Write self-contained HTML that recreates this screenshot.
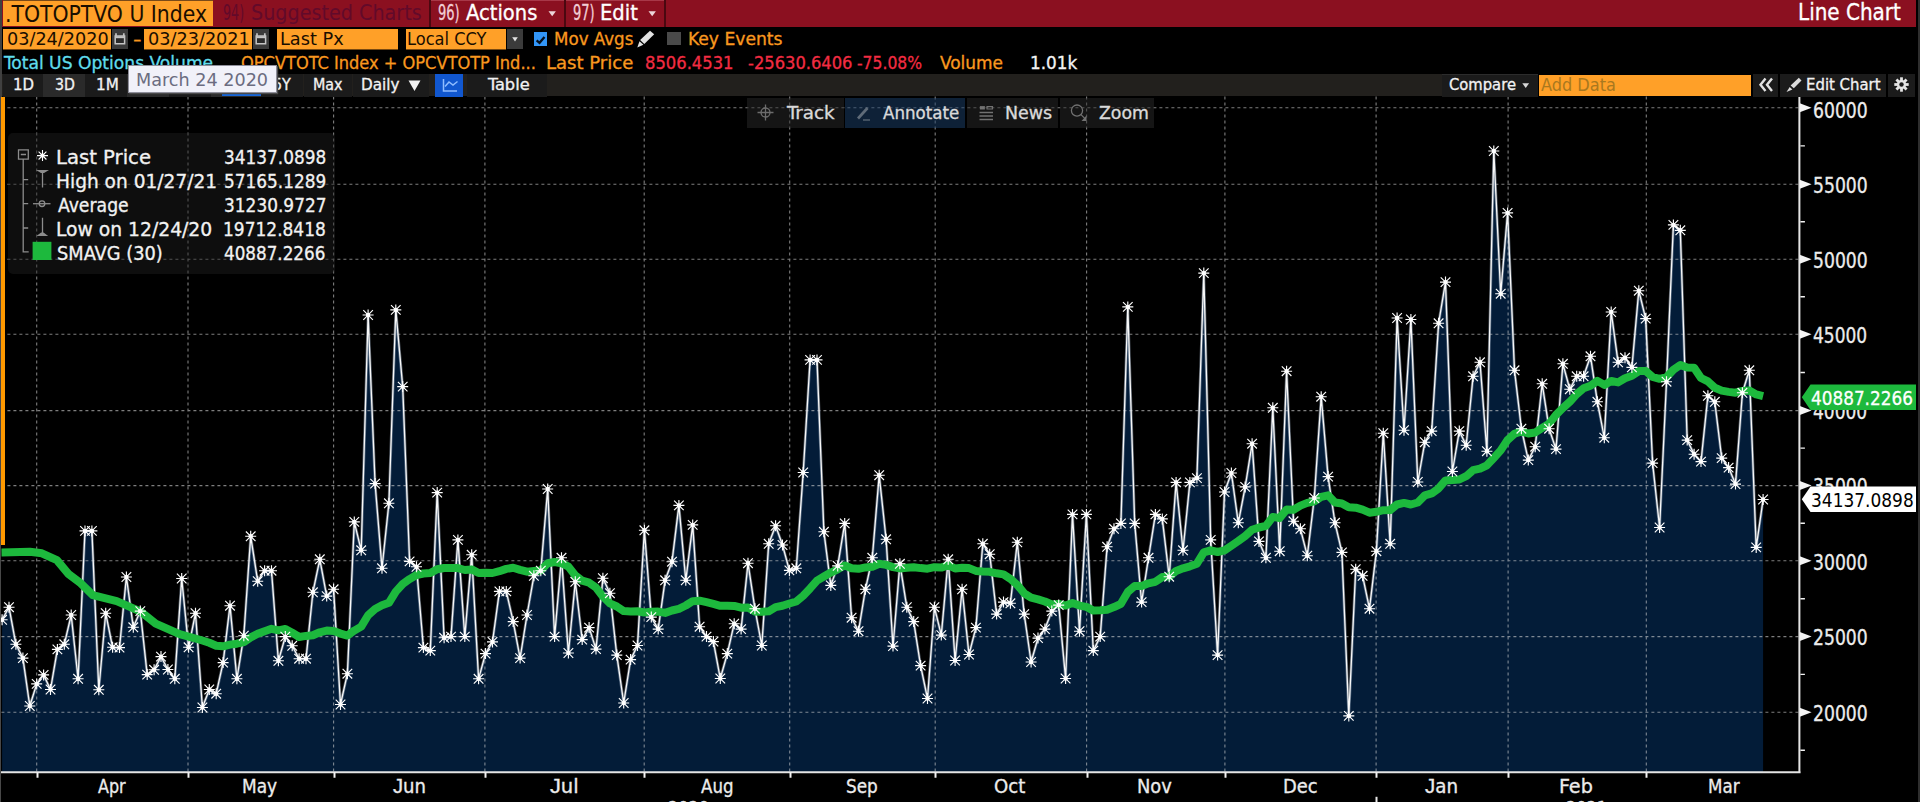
<!DOCTYPE html>
<html lang="en"><head><meta charset="utf-8"><title>.TOTOPTVO U Index - Line Chart</title>
<style>
html,body{margin:0;padding:0;background:#000;}
body{width:1920px;height:802px;overflow:hidden;position:relative;font-family:"DejaVu Sans Condensed","Liberation Sans",sans-serif;color:#fff;}
.a{position:absolute;white-space:pre;line-height:1;transform-origin:0 0;}
.k{-webkit-text-stroke:.3px;}
.b{position:absolute;}
#chart{position:absolute;left:0;top:0;}
.or{background:#ffa028;}
.tb{position:absolute;top:74px;height:22.5px;background:#1b1b1b;}
</style></head><body>
<svg id="chart" width="1920" height="802" viewBox="0 0 1920 802">
<defs><g id="s" stroke="#fff" stroke-width="1.15" stroke-linecap="butt"><path d="M-5.500 0H5.500M0 -5.500V5.500M-4.800 -4.800L4.800 4.800M-4.800 4.800L4.800 -4.800"/><circle r="2.200" fill="#fff" stroke="none"/></g></defs>
<path d="M2.1 772.25 L2.1 619.8 L9.0 607.2 L15.9 644.3 L22.9 658.1 L29.8 706.0 L36.7 683.9 L43.6 674.9 L50.5 689.5 L57.4 649.4 L64.3 644.3 L71.2 615.0 L78.1 678.8 L85.0 530.9 L91.9 530.9 L98.8 689.8 L105.7 613.2 L112.6 647.3 L119.5 647.6 L126.4 577.0 L133.3 627.3 L140.3 611.1 L147.2 674.6 L154.1 669.8 L161.0 656.6 L167.9 669.5 L174.8 678.8 L181.7 578.5 L188.6 647.3 L195.5 613.2 L202.4 707.5 L209.3 689.5 L216.2 693.7 L223.1 662.6 L230.0 605.7 L236.9 678.8 L243.8 635.7 L250.7 536.3 L257.7 581.2 L264.6 570.7 L271.5 570.7 L278.4 660.8 L285.3 636.6 L292.2 645.8 L299.1 658.7 L306.0 658.7 L312.9 592.3 L319.8 559.3 L326.7 596.1 L333.6 589.3 L340.5 704.5 L347.4 673.7 L354.3 521.9 L361.2 550.3 L368.1 315.0 L375.1 483.6 L382.0 568.3 L388.9 503.3 L395.8 309.9 L402.7 386.6 L409.6 561.4 L416.5 566.8 L423.4 647.6 L430.3 650.6 L437.2 492.6 L444.1 637.8 L451.0 636.6 L457.9 539.9 L464.8 636.6 L471.7 554.8 L478.6 678.8 L485.5 653.6 L492.5 641.9 L499.4 591.4 L506.3 591.4 L513.2 621.6 L520.1 658.1 L527.0 615.0 L533.9 575.8 L540.8 570.7 L547.7 489.0 L554.6 636.6 L561.5 557.8 L568.4 653.0 L575.3 581.8 L582.2 639.6 L589.1 627.6 L596.0 649.1 L602.9 578.2 L609.9 593.2 L616.8 655.1 L623.7 703.0 L630.6 659.6 L637.5 645.5 L644.4 530.3 L651.3 617.1 L658.2 629.1 L665.1 580.3 L672.0 561.7 L678.9 505.4 L685.8 580.3 L692.7 524.9 L699.6 626.7 L706.5 636.6 L713.4 641.6 L720.3 678.5 L727.3 653.6 L734.2 623.7 L741.1 629.1 L748.0 563.2 L754.9 608.7 L761.8 645.5 L768.7 543.8 L775.6 525.8 L782.5 545.0 L789.4 570.4 L796.3 568.3 L803.2 472.5 L810.1 359.9 L817.0 359.9 L823.9 531.8 L830.8 585.4 L837.7 565.9 L844.7 523.4 L851.6 617.7 L858.5 631.2 L865.4 589.3 L872.3 557.8 L879.2 475.2 L886.1 539.3 L893.0 646.1 L899.9 563.8 L906.8 607.2 L913.7 621.6 L920.6 665.6 L927.5 698.5 L934.4 607.2 L941.3 635.1 L948.2 559.3 L955.1 660.5 L962.1 589.3 L969.0 654.5 L975.9 627.6 L982.8 543.8 L989.7 554.2 L996.6 614.1 L1003.5 602.1 L1010.4 603.3 L1017.3 542.3 L1024.2 614.1 L1031.1 662.0 L1038.0 638.1 L1044.9 629.1 L1051.8 611.1 L1058.7 605.1 L1065.6 678.5 L1072.5 514.4 L1079.5 631.2 L1086.4 514.4 L1093.3 650.6 L1100.2 636.6 L1107.1 546.8 L1114.0 528.8 L1120.9 523.4 L1127.8 306.9 L1134.7 523.4 L1141.6 602.1 L1148.5 557.8 L1155.4 514.4 L1162.3 518.9 L1169.2 576.7 L1176.1 482.4 L1183.0 550.3 L1189.9 482.4 L1196.9 478.1 L1203.8 273.1 L1210.7 539.9 L1217.6 655.1 L1224.5 492.0 L1231.4 473.0 L1238.3 522.8 L1245.2 486.9 L1252.1 443.7 L1259.0 541.4 L1265.9 557.8 L1272.8 407.8 L1279.7 551.2 L1286.6 371.2 L1293.5 521.3 L1300.4 528.8 L1307.3 555.7 L1314.3 498.0 L1321.2 396.7 L1328.1 476.6 L1335.0 522.8 L1341.9 552.4 L1348.8 715.9 L1355.7 569.2 L1362.6 575.8 L1369.5 608.7 L1376.4 551.2 L1383.3 433.2 L1390.2 543.8 L1397.1 318.0 L1404.0 430.2 L1410.9 319.5 L1417.8 482.0 L1424.8 442.2 L1431.7 431.1 L1438.6 323.3 L1445.5 282.1 L1452.4 471.5 L1459.3 431.1 L1466.2 445.2 L1473.1 376.3 L1480.0 362.3 L1486.9 451.2 L1493.8 151.0 L1500.7 293.7 L1507.6 212.9 L1514.5 370.3 L1521.4 428.7 L1528.3 460.1 L1535.2 446.7 L1542.2 383.8 L1549.1 428.7 L1556.0 449.1 L1562.9 363.8 L1569.8 389.2 L1576.7 376.3 L1583.6 376.3 L1590.5 356.3 L1597.4 401.8 L1604.3 437.7 L1611.2 312.0 L1618.1 362.3 L1625.0 357.8 L1631.9 367.4 L1638.8 290.7 L1645.7 318.6 L1652.6 463.1 L1659.6 527.5 L1666.5 381.7 L1673.4 224.9 L1680.3 230.3 L1687.2 440.1 L1694.1 454.2 L1701.0 461.6 L1707.9 395.8 L1714.8 401.8 L1721.7 458.1 L1728.6 467.6 L1735.5 484.1 L1742.4 392.8 L1749.3 370.3 L1756.2 547.4 L1763.1 499.5 L1763.1 772.25 Z" fill="#031c38"/>
<path d="M1.400 712.2H1799.4 M1.400 636.6H1799.4 M1.400 560.7H1799.4 M1.400 485.6H1799.4 M1.400 410.6H1799.4 M1.400 334.3H1799.4 M1.400 259.2H1799.4 M1.400 184.2H1799.4 M1.400 107.7H1799.4 M36.7 96.5V772.25 M188.0 96.5V772.25 M333.6 96.5V772.25 M484.9 96.5V772.25 M644.2 96.5V772.25 M789.7 96.5V772.25 M935.2 96.5V772.25 M1086.6 96.5V772.25 M1224.9 96.5V772.25 M1376.1 96.5V772.25 M1508.1 96.5V772.25 M1646.3 96.5V772.25" stroke="#d2d2d2" stroke-width="1.1" stroke-dasharray="3 3" fill="none" opacity="0.6"/>
<path d="M2.1 619.8 L9.0 607.2 L15.9 644.3 L22.9 658.1 L29.8 706.0 L36.7 683.9 L43.6 674.9 L50.5 689.5 L57.4 649.4 L64.3 644.3 L71.2 615.0 L78.1 678.8 L85.0 530.9 L91.9 530.9 L98.8 689.8 L105.7 613.2 L112.6 647.3 L119.5 647.6 L126.4 577.0 L133.3 627.3 L140.3 611.1 L147.2 674.6 L154.1 669.8 L161.0 656.6 L167.9 669.5 L174.8 678.8 L181.7 578.5 L188.6 647.3 L195.5 613.2 L202.4 707.5 L209.3 689.5 L216.2 693.7 L223.1 662.6 L230.0 605.7 L236.9 678.8 L243.8 635.7 L250.7 536.3 L257.7 581.2 L264.6 570.7 L271.5 570.7 L278.4 660.8 L285.3 636.6 L292.2 645.8 L299.1 658.7 L306.0 658.7 L312.9 592.3 L319.8 559.3 L326.7 596.1 L333.6 589.3 L340.5 704.5 L347.4 673.7 L354.3 521.9 L361.2 550.3 L368.1 315.0 L375.1 483.6 L382.0 568.3 L388.9 503.3 L395.8 309.9 L402.7 386.6 L409.6 561.4 L416.5 566.8 L423.4 647.6 L430.3 650.6 L437.2 492.6 L444.1 637.8 L451.0 636.6 L457.9 539.9 L464.8 636.6 L471.7 554.8 L478.6 678.8 L485.5 653.6 L492.5 641.9 L499.4 591.4 L506.3 591.4 L513.2 621.6 L520.1 658.1 L527.0 615.0 L533.9 575.8 L540.8 570.7 L547.7 489.0 L554.6 636.6 L561.5 557.8 L568.4 653.0 L575.3 581.8 L582.2 639.6 L589.1 627.6 L596.0 649.1 L602.9 578.2 L609.9 593.2 L616.8 655.1 L623.7 703.0 L630.6 659.6 L637.5 645.5 L644.4 530.3 L651.3 617.1 L658.2 629.1 L665.1 580.3 L672.0 561.7 L678.9 505.4 L685.8 580.3 L692.7 524.9 L699.6 626.7 L706.5 636.6 L713.4 641.6 L720.3 678.5 L727.3 653.6 L734.2 623.7 L741.1 629.1 L748.0 563.2 L754.9 608.7 L761.8 645.5 L768.7 543.8 L775.6 525.8 L782.5 545.0 L789.4 570.4 L796.3 568.3 L803.2 472.5 L810.1 359.9 L817.0 359.9 L823.9 531.8 L830.8 585.4 L837.7 565.9 L844.7 523.4 L851.6 617.7 L858.5 631.2 L865.4 589.3 L872.3 557.8 L879.2 475.2 L886.1 539.3 L893.0 646.1 L899.9 563.8 L906.8 607.2 L913.7 621.6 L920.6 665.6 L927.5 698.5 L934.4 607.2 L941.3 635.1 L948.2 559.3 L955.1 660.5 L962.1 589.3 L969.0 654.5 L975.9 627.6 L982.8 543.8 L989.7 554.2 L996.6 614.1 L1003.5 602.1 L1010.4 603.3 L1017.3 542.3 L1024.2 614.1 L1031.1 662.0 L1038.0 638.1 L1044.9 629.1 L1051.8 611.1 L1058.7 605.1 L1065.6 678.5 L1072.5 514.4 L1079.5 631.2 L1086.4 514.4 L1093.3 650.6 L1100.2 636.6 L1107.1 546.8 L1114.0 528.8 L1120.9 523.4 L1127.8 306.9 L1134.7 523.4 L1141.6 602.1 L1148.5 557.8 L1155.4 514.4 L1162.3 518.9 L1169.2 576.7 L1176.1 482.4 L1183.0 550.3 L1189.9 482.4 L1196.9 478.1 L1203.8 273.1 L1210.7 539.9 L1217.6 655.1 L1224.5 492.0 L1231.4 473.0 L1238.3 522.8 L1245.2 486.9 L1252.1 443.7 L1259.0 541.4 L1265.9 557.8 L1272.8 407.8 L1279.7 551.2 L1286.6 371.2 L1293.5 521.3 L1300.4 528.8 L1307.3 555.7 L1314.3 498.0 L1321.2 396.7 L1328.1 476.6 L1335.0 522.8 L1341.9 552.4 L1348.8 715.9 L1355.7 569.2 L1362.6 575.8 L1369.5 608.7 L1376.4 551.2 L1383.3 433.2 L1390.2 543.8 L1397.1 318.0 L1404.0 430.2 L1410.9 319.5 L1417.8 482.0 L1424.8 442.2 L1431.7 431.1 L1438.6 323.3 L1445.5 282.1 L1452.4 471.5 L1459.3 431.1 L1466.2 445.2 L1473.1 376.3 L1480.0 362.3 L1486.9 451.2 L1493.8 151.0 L1500.7 293.7 L1507.6 212.9 L1514.5 370.3 L1521.4 428.7 L1528.3 460.1 L1535.2 446.7 L1542.2 383.8 L1549.1 428.7 L1556.0 449.1 L1562.9 363.8 L1569.8 389.2 L1576.7 376.3 L1583.6 376.3 L1590.5 356.3 L1597.4 401.8 L1604.3 437.7 L1611.2 312.0 L1618.1 362.3 L1625.0 357.8 L1631.9 367.4 L1638.8 290.7 L1645.7 318.6 L1652.6 463.1 L1659.6 527.5 L1666.5 381.7 L1673.4 224.9 L1680.3 230.3 L1687.2 440.1 L1694.1 454.2 L1701.0 461.6 L1707.9 395.8 L1714.8 401.8 L1721.7 458.1 L1728.6 467.6 L1735.5 484.1 L1742.4 392.8 L1749.3 370.3 L1756.2 547.4 L1763.1 499.5" stroke="#9fb0c4" stroke-width="2.8" fill="none" opacity="0.5" stroke-linejoin="round"/>
<path d="M2.1 619.8 L9.0 607.2 L15.9 644.3 L22.9 658.1 L29.8 706.0 L36.7 683.9 L43.6 674.9 L50.5 689.5 L57.4 649.4 L64.3 644.3 L71.2 615.0 L78.1 678.8 L85.0 530.9 L91.9 530.9 L98.8 689.8 L105.7 613.2 L112.6 647.3 L119.5 647.6 L126.4 577.0 L133.3 627.3 L140.3 611.1 L147.2 674.6 L154.1 669.8 L161.0 656.6 L167.9 669.5 L174.8 678.8 L181.7 578.5 L188.6 647.3 L195.5 613.2 L202.4 707.5 L209.3 689.5 L216.2 693.7 L223.1 662.6 L230.0 605.7 L236.9 678.8 L243.8 635.7 L250.7 536.3 L257.7 581.2 L264.6 570.7 L271.5 570.7 L278.4 660.8 L285.3 636.6 L292.2 645.8 L299.1 658.7 L306.0 658.7 L312.9 592.3 L319.8 559.3 L326.7 596.1 L333.6 589.3 L340.5 704.5 L347.4 673.7 L354.3 521.9 L361.2 550.3 L368.1 315.0 L375.1 483.6 L382.0 568.3 L388.9 503.3 L395.8 309.9 L402.7 386.6 L409.6 561.4 L416.5 566.8 L423.4 647.6 L430.3 650.6 L437.2 492.6 L444.1 637.8 L451.0 636.6 L457.9 539.9 L464.8 636.6 L471.7 554.8 L478.6 678.8 L485.5 653.6 L492.5 641.9 L499.4 591.4 L506.3 591.4 L513.2 621.6 L520.1 658.1 L527.0 615.0 L533.9 575.8 L540.8 570.7 L547.7 489.0 L554.6 636.6 L561.5 557.8 L568.4 653.0 L575.3 581.8 L582.2 639.6 L589.1 627.6 L596.0 649.1 L602.9 578.2 L609.9 593.2 L616.8 655.1 L623.7 703.0 L630.6 659.6 L637.5 645.5 L644.4 530.3 L651.3 617.1 L658.2 629.1 L665.1 580.3 L672.0 561.7 L678.9 505.4 L685.8 580.3 L692.7 524.9 L699.6 626.7 L706.5 636.6 L713.4 641.6 L720.3 678.5 L727.3 653.6 L734.2 623.7 L741.1 629.1 L748.0 563.2 L754.9 608.7 L761.8 645.5 L768.7 543.8 L775.6 525.8 L782.5 545.0 L789.4 570.4 L796.3 568.3 L803.2 472.5 L810.1 359.9 L817.0 359.9 L823.9 531.8 L830.8 585.4 L837.7 565.9 L844.7 523.4 L851.6 617.7 L858.5 631.2 L865.4 589.3 L872.3 557.8 L879.2 475.2 L886.1 539.3 L893.0 646.1 L899.9 563.8 L906.8 607.2 L913.7 621.6 L920.6 665.6 L927.5 698.5 L934.4 607.2 L941.3 635.1 L948.2 559.3 L955.1 660.5 L962.1 589.3 L969.0 654.5 L975.9 627.6 L982.8 543.8 L989.7 554.2 L996.6 614.1 L1003.5 602.1 L1010.4 603.3 L1017.3 542.3 L1024.2 614.1 L1031.1 662.0 L1038.0 638.1 L1044.9 629.1 L1051.8 611.1 L1058.7 605.1 L1065.6 678.5 L1072.5 514.4 L1079.5 631.2 L1086.4 514.4 L1093.3 650.6 L1100.2 636.6 L1107.1 546.8 L1114.0 528.8 L1120.9 523.4 L1127.8 306.9 L1134.7 523.4 L1141.6 602.1 L1148.5 557.8 L1155.4 514.4 L1162.3 518.9 L1169.2 576.7 L1176.1 482.4 L1183.0 550.3 L1189.9 482.4 L1196.9 478.1 L1203.8 273.1 L1210.7 539.9 L1217.6 655.1 L1224.5 492.0 L1231.4 473.0 L1238.3 522.8 L1245.2 486.9 L1252.1 443.7 L1259.0 541.4 L1265.9 557.8 L1272.8 407.8 L1279.7 551.2 L1286.6 371.2 L1293.5 521.3 L1300.4 528.8 L1307.3 555.7 L1314.3 498.0 L1321.2 396.7 L1328.1 476.6 L1335.0 522.8 L1341.9 552.4 L1348.8 715.9 L1355.7 569.2 L1362.6 575.8 L1369.5 608.7 L1376.4 551.2 L1383.3 433.2 L1390.2 543.8 L1397.1 318.0 L1404.0 430.2 L1410.9 319.5 L1417.8 482.0 L1424.8 442.2 L1431.7 431.1 L1438.6 323.3 L1445.5 282.1 L1452.4 471.5 L1459.3 431.1 L1466.2 445.2 L1473.1 376.3 L1480.0 362.3 L1486.9 451.2 L1493.8 151.0 L1500.7 293.7 L1507.6 212.9 L1514.5 370.3 L1521.4 428.7 L1528.3 460.1 L1535.2 446.7 L1542.2 383.8 L1549.1 428.7 L1556.0 449.1 L1562.9 363.8 L1569.8 389.2 L1576.7 376.3 L1583.6 376.3 L1590.5 356.3 L1597.4 401.8 L1604.3 437.7 L1611.2 312.0 L1618.1 362.3 L1625.0 357.8 L1631.9 367.4 L1638.8 290.7 L1645.7 318.6 L1652.6 463.1 L1659.6 527.5 L1666.5 381.7 L1673.4 224.9 L1680.3 230.3 L1687.2 440.1 L1694.1 454.2 L1701.0 461.6 L1707.9 395.8 L1714.8 401.8 L1721.7 458.1 L1728.6 467.6 L1735.5 484.1 L1742.4 392.8 L1749.3 370.3 L1756.2 547.4 L1763.1 499.5" stroke="#f8f8f8" stroke-width="1.3" fill="none" stroke-linejoin="round"/>
<path d="M1.5 552.4 L29.9 551.8 L41.9 553.3 L56.9 560.2 L68.8 574.3 L80.8 583.3 L92.8 595.2 L116.7 601.2 L140.7 611.7 L155.7 623.7 L179.6 634.2 L202.4 640.5 L209.3 642.8 L216.2 645.7 L223.1 646.3 L230.0 644.6 L236.9 643.7 L243.8 642.1 L250.7 637.4 L257.7 633.8 L264.6 631.2 L271.5 628.8 L278.4 630.3 L285.3 628.9 L292.2 632.7 L299.1 637.0 L306.0 635.9 L312.9 635.2 L319.8 632.3 L326.7 630.6 L333.6 631.0 L340.5 633.6 L347.4 635.6 L354.3 630.6 L361.2 626.6 L368.1 615.2 L375.1 609.0 L382.0 605.3 L388.9 602.8 L395.8 591.6 L402.7 584.0 L409.6 579.1 L416.5 575.0 L423.4 573.5 L430.3 573.1 L437.2 569.3 L444.1 568.0 L451.0 568.0 L457.9 568.1 L464.8 570.0 L471.7 569.4 L478.6 573.0 L485.5 572.8 L492.5 573.0 L499.4 571.2 L506.3 568.9 L513.2 567.7 L520.1 569.9 L527.0 571.7 L533.9 571.1 L540.8 570.4 L547.7 563.3 L554.6 562.0 L561.5 563.2 L568.4 566.6 L575.3 575.5 L582.2 580.7 L589.1 582.7 L596.0 587.6 L602.9 596.5 L609.9 603.4 L616.8 606.5 L623.7 611.1 L630.6 611.5 L637.5 611.3 L644.4 612.5 L651.3 611.8 L658.2 611.6 L665.1 612.9 L672.0 610.5 L678.9 608.8 L685.8 605.5 L692.7 601.2 L699.6 600.7 L706.5 602.2 L713.4 603.9 L720.3 605.8 L727.3 605.7 L734.2 605.9 L741.1 607.7 L748.0 607.5 L754.9 611.5 L761.8 611.8 L768.7 611.3 L775.6 607.1 L782.5 605.8 L789.4 603.5 L796.3 601.5 L803.2 595.7 L810.1 588.4 L817.0 580.6 L823.9 576.5 L830.8 572.6 L837.7 569.4 L844.7 565.4 L851.6 568.3 L858.5 568.8 L865.4 567.4 L872.3 566.7 L879.2 563.8 L886.1 564.9 L893.0 567.1 L899.9 568.4 L906.8 567.8 L913.7 567.3 L920.6 568.1 L927.5 568.7 L934.4 567.2 L941.3 567.6 L948.2 565.2 L955.1 568.5 L962.1 567.8 L969.0 568.1 L975.9 570.9 L982.8 571.5 L989.7 571.8 L996.6 573.3 L1003.5 574.4 L1010.4 578.8 L1017.3 584.9 L1024.2 593.3 L1031.1 597.7 L1038.0 599.4 L1044.9 601.5 L1051.8 604.5 L1058.7 604.0 L1065.6 605.6 L1072.5 603.1 L1079.5 605.6 L1086.4 606.9 L1093.3 610.6 L1100.2 610.3 L1107.1 609.7 L1114.0 607.1 L1120.9 603.8 L1127.8 591.9 L1134.7 586.0 L1141.6 585.9 L1148.5 583.3 L1155.4 581.8 L1162.3 577.1 L1169.2 576.6 L1176.1 570.9 L1183.0 568.3 L1189.9 566.3 L1196.9 563.7 L1203.8 552.4 L1210.7 550.3 L1217.6 552.0 L1224.5 550.4 L1231.4 545.7 L1238.3 541.0 L1245.2 536.0 L1252.1 529.8 L1259.0 527.5 L1265.9 525.9 L1272.8 516.9 L1279.7 518.1 L1286.6 509.4 L1293.5 509.7 L1300.4 505.6 L1307.3 502.9 L1314.3 501.3 L1321.2 496.9 L1328.1 495.3 L1335.0 502.5 L1341.9 503.5 L1348.8 507.3 L1355.7 507.7 L1362.6 509.7 L1369.5 512.7 L1376.4 511.8 L1383.3 510.2 L1390.2 510.0 L1397.1 504.5 L1404.0 502.9 L1410.9 504.5 L1417.8 502.5 L1424.8 495.4 L1431.7 493.4 L1438.6 488.4 L1445.5 480.4 L1452.4 479.9 L1459.3 479.5 L1466.2 476.2 L1473.1 470.2 L1480.0 468.7 L1486.9 465.3 L1493.8 458.0 L1500.7 450.4 L1507.6 439.9 L1514.5 433.7 L1521.4 431.4 L1528.3 433.5 L1535.2 432.5 L1542.2 427.9 L1549.1 423.8 L1556.0 414.9 L1562.9 408.0 L1569.8 401.8 L1576.7 394.1 L1583.6 388.2 L1590.5 385.7 L1597.4 380.9 L1604.3 384.9 L1611.2 381.0 L1618.1 382.4 L1625.0 378.3 L1631.9 375.8 L1638.8 371.1 L1645.7 370.9 L1652.6 377.0 L1659.6 378.8 L1666.5 377.2 L1673.4 369.8 L1680.3 365.0 L1687.2 367.6 L1694.1 367.7 L1701.0 378.0 L1707.9 381.4 L1714.8 387.7 L1721.7 390.6 L1728.6 391.9 L1735.5 392.7 L1742.4 390.9 L1749.3 390.5 L1756.2 394.4 L1763.1 396.1" stroke="#1db93d" stroke-width="8" fill="none" stroke-linejoin="round" stroke-linecap="butt"/>
<g><use href="#s" x="2.1" y="619.8"/><use href="#s" x="9.0" y="607.2"/><use href="#s" x="15.9" y="644.3"/><use href="#s" x="22.9" y="658.1"/><use href="#s" x="29.8" y="706.0"/><use href="#s" x="36.7" y="683.9"/><use href="#s" x="43.6" y="674.9"/><use href="#s" x="50.5" y="689.5"/><use href="#s" x="57.4" y="649.4"/><use href="#s" x="64.3" y="644.3"/><use href="#s" x="71.2" y="615.0"/><use href="#s" x="78.1" y="678.8"/><use href="#s" x="85.0" y="530.9"/><use href="#s" x="91.9" y="530.9"/><use href="#s" x="98.8" y="689.8"/><use href="#s" x="105.7" y="613.2"/><use href="#s" x="112.6" y="647.3"/><use href="#s" x="119.5" y="647.6"/><use href="#s" x="126.4" y="577.0"/><use href="#s" x="133.3" y="627.3"/><use href="#s" x="140.3" y="611.1"/><use href="#s" x="147.2" y="674.6"/><use href="#s" x="154.1" y="669.8"/><use href="#s" x="161.0" y="656.6"/><use href="#s" x="167.9" y="669.5"/><use href="#s" x="174.8" y="678.8"/><use href="#s" x="181.7" y="578.5"/><use href="#s" x="188.6" y="647.3"/><use href="#s" x="195.5" y="613.2"/><use href="#s" x="202.4" y="707.5"/><use href="#s" x="209.3" y="689.5"/><use href="#s" x="216.2" y="693.7"/><use href="#s" x="223.1" y="662.6"/><use href="#s" x="230.0" y="605.7"/><use href="#s" x="236.9" y="678.8"/><use href="#s" x="243.8" y="635.7"/><use href="#s" x="250.7" y="536.3"/><use href="#s" x="257.7" y="581.2"/><use href="#s" x="264.6" y="570.7"/><use href="#s" x="271.5" y="570.7"/><use href="#s" x="278.4" y="660.8"/><use href="#s" x="285.3" y="636.6"/><use href="#s" x="292.2" y="645.8"/><use href="#s" x="299.1" y="658.7"/><use href="#s" x="306.0" y="658.7"/><use href="#s" x="312.9" y="592.3"/><use href="#s" x="319.8" y="559.3"/><use href="#s" x="326.7" y="596.1"/><use href="#s" x="333.6" y="589.3"/><use href="#s" x="340.5" y="704.5"/><use href="#s" x="347.4" y="673.7"/><use href="#s" x="354.3" y="521.9"/><use href="#s" x="361.2" y="550.3"/><use href="#s" x="368.1" y="315.0"/><use href="#s" x="375.1" y="483.6"/><use href="#s" x="382.0" y="568.3"/><use href="#s" x="388.9" y="503.3"/><use href="#s" x="395.8" y="309.9"/><use href="#s" x="402.7" y="386.6"/><use href="#s" x="409.6" y="561.4"/><use href="#s" x="416.5" y="566.8"/><use href="#s" x="423.4" y="647.6"/><use href="#s" x="430.3" y="650.6"/><use href="#s" x="437.2" y="492.6"/><use href="#s" x="444.1" y="637.8"/><use href="#s" x="451.0" y="636.6"/><use href="#s" x="457.9" y="539.9"/><use href="#s" x="464.8" y="636.6"/><use href="#s" x="471.7" y="554.8"/><use href="#s" x="478.6" y="678.8"/><use href="#s" x="485.5" y="653.6"/><use href="#s" x="492.5" y="641.9"/><use href="#s" x="499.4" y="591.4"/><use href="#s" x="506.3" y="591.4"/><use href="#s" x="513.2" y="621.6"/><use href="#s" x="520.1" y="658.1"/><use href="#s" x="527.0" y="615.0"/><use href="#s" x="533.9" y="575.8"/><use href="#s" x="540.8" y="570.7"/><use href="#s" x="547.7" y="489.0"/><use href="#s" x="554.6" y="636.6"/><use href="#s" x="561.5" y="557.8"/><use href="#s" x="568.4" y="653.0"/><use href="#s" x="575.3" y="581.8"/><use href="#s" x="582.2" y="639.6"/><use href="#s" x="589.1" y="627.6"/><use href="#s" x="596.0" y="649.1"/><use href="#s" x="602.9" y="578.2"/><use href="#s" x="609.9" y="593.2"/><use href="#s" x="616.8" y="655.1"/><use href="#s" x="623.7" y="703.0"/><use href="#s" x="630.6" y="659.6"/><use href="#s" x="637.5" y="645.5"/><use href="#s" x="644.4" y="530.3"/><use href="#s" x="651.3" y="617.1"/><use href="#s" x="658.2" y="629.1"/><use href="#s" x="665.1" y="580.3"/><use href="#s" x="672.0" y="561.7"/><use href="#s" x="678.9" y="505.4"/><use href="#s" x="685.8" y="580.3"/><use href="#s" x="692.7" y="524.9"/><use href="#s" x="699.6" y="626.7"/><use href="#s" x="706.5" y="636.6"/><use href="#s" x="713.4" y="641.6"/><use href="#s" x="720.3" y="678.5"/><use href="#s" x="727.3" y="653.6"/><use href="#s" x="734.2" y="623.7"/><use href="#s" x="741.1" y="629.1"/><use href="#s" x="748.0" y="563.2"/><use href="#s" x="754.9" y="608.7"/><use href="#s" x="761.8" y="645.5"/><use href="#s" x="768.7" y="543.8"/><use href="#s" x="775.6" y="525.8"/><use href="#s" x="782.5" y="545.0"/><use href="#s" x="789.4" y="570.4"/><use href="#s" x="796.3" y="568.3"/><use href="#s" x="803.2" y="472.5"/><use href="#s" x="810.1" y="359.9"/><use href="#s" x="817.0" y="359.9"/><use href="#s" x="823.9" y="531.8"/><use href="#s" x="830.8" y="585.4"/><use href="#s" x="837.7" y="565.9"/><use href="#s" x="844.7" y="523.4"/><use href="#s" x="851.6" y="617.7"/><use href="#s" x="858.5" y="631.2"/><use href="#s" x="865.4" y="589.3"/><use href="#s" x="872.3" y="557.8"/><use href="#s" x="879.2" y="475.2"/><use href="#s" x="886.1" y="539.3"/><use href="#s" x="893.0" y="646.1"/><use href="#s" x="899.9" y="563.8"/><use href="#s" x="906.8" y="607.2"/><use href="#s" x="913.7" y="621.6"/><use href="#s" x="920.6" y="665.6"/><use href="#s" x="927.5" y="698.5"/><use href="#s" x="934.4" y="607.2"/><use href="#s" x="941.3" y="635.1"/><use href="#s" x="948.2" y="559.3"/><use href="#s" x="955.1" y="660.5"/><use href="#s" x="962.1" y="589.3"/><use href="#s" x="969.0" y="654.5"/><use href="#s" x="975.9" y="627.6"/><use href="#s" x="982.8" y="543.8"/><use href="#s" x="989.7" y="554.2"/><use href="#s" x="996.6" y="614.1"/><use href="#s" x="1003.5" y="602.1"/><use href="#s" x="1010.4" y="603.3"/><use href="#s" x="1017.3" y="542.3"/><use href="#s" x="1024.2" y="614.1"/><use href="#s" x="1031.1" y="662.0"/><use href="#s" x="1038.0" y="638.1"/><use href="#s" x="1044.9" y="629.1"/><use href="#s" x="1051.8" y="611.1"/><use href="#s" x="1058.7" y="605.1"/><use href="#s" x="1065.6" y="678.5"/><use href="#s" x="1072.5" y="514.4"/><use href="#s" x="1079.5" y="631.2"/><use href="#s" x="1086.4" y="514.4"/><use href="#s" x="1093.3" y="650.6"/><use href="#s" x="1100.2" y="636.6"/><use href="#s" x="1107.1" y="546.8"/><use href="#s" x="1114.0" y="528.8"/><use href="#s" x="1120.9" y="523.4"/><use href="#s" x="1127.8" y="306.9"/><use href="#s" x="1134.7" y="523.4"/><use href="#s" x="1141.6" y="602.1"/><use href="#s" x="1148.5" y="557.8"/><use href="#s" x="1155.4" y="514.4"/><use href="#s" x="1162.3" y="518.9"/><use href="#s" x="1169.2" y="576.7"/><use href="#s" x="1176.1" y="482.4"/><use href="#s" x="1183.0" y="550.3"/><use href="#s" x="1189.9" y="482.4"/><use href="#s" x="1196.9" y="478.1"/><use href="#s" x="1203.8" y="273.1"/><use href="#s" x="1210.7" y="539.9"/><use href="#s" x="1217.6" y="655.1"/><use href="#s" x="1224.5" y="492.0"/><use href="#s" x="1231.4" y="473.0"/><use href="#s" x="1238.3" y="522.8"/><use href="#s" x="1245.2" y="486.9"/><use href="#s" x="1252.1" y="443.7"/><use href="#s" x="1259.0" y="541.4"/><use href="#s" x="1265.9" y="557.8"/><use href="#s" x="1272.8" y="407.8"/><use href="#s" x="1279.7" y="551.2"/><use href="#s" x="1286.6" y="371.2"/><use href="#s" x="1293.5" y="521.3"/><use href="#s" x="1300.4" y="528.8"/><use href="#s" x="1307.3" y="555.7"/><use href="#s" x="1314.3" y="498.0"/><use href="#s" x="1321.2" y="396.7"/><use href="#s" x="1328.1" y="476.6"/><use href="#s" x="1335.0" y="522.8"/><use href="#s" x="1341.9" y="552.4"/><use href="#s" x="1348.8" y="715.9"/><use href="#s" x="1355.7" y="569.2"/><use href="#s" x="1362.6" y="575.8"/><use href="#s" x="1369.5" y="608.7"/><use href="#s" x="1376.4" y="551.2"/><use href="#s" x="1383.3" y="433.2"/><use href="#s" x="1390.2" y="543.8"/><use href="#s" x="1397.1" y="318.0"/><use href="#s" x="1404.0" y="430.2"/><use href="#s" x="1410.9" y="319.5"/><use href="#s" x="1417.8" y="482.0"/><use href="#s" x="1424.8" y="442.2"/><use href="#s" x="1431.7" y="431.1"/><use href="#s" x="1438.6" y="323.3"/><use href="#s" x="1445.5" y="282.1"/><use href="#s" x="1452.4" y="471.5"/><use href="#s" x="1459.3" y="431.1"/><use href="#s" x="1466.2" y="445.2"/><use href="#s" x="1473.1" y="376.3"/><use href="#s" x="1480.0" y="362.3"/><use href="#s" x="1486.9" y="451.2"/><use href="#s" x="1493.8" y="151.0"/><use href="#s" x="1500.7" y="293.7"/><use href="#s" x="1507.6" y="212.9"/><use href="#s" x="1514.5" y="370.3"/><use href="#s" x="1521.4" y="428.7"/><use href="#s" x="1528.3" y="460.1"/><use href="#s" x="1535.2" y="446.7"/><use href="#s" x="1542.2" y="383.8"/><use href="#s" x="1549.1" y="428.7"/><use href="#s" x="1556.0" y="449.1"/><use href="#s" x="1562.9" y="363.8"/><use href="#s" x="1569.8" y="389.2"/><use href="#s" x="1576.7" y="376.3"/><use href="#s" x="1583.6" y="376.3"/><use href="#s" x="1590.5" y="356.3"/><use href="#s" x="1597.4" y="401.8"/><use href="#s" x="1604.3" y="437.7"/><use href="#s" x="1611.2" y="312.0"/><use href="#s" x="1618.1" y="362.3"/><use href="#s" x="1625.0" y="357.8"/><use href="#s" x="1631.9" y="367.4"/><use href="#s" x="1638.8" y="290.7"/><use href="#s" x="1645.7" y="318.6"/><use href="#s" x="1652.6" y="463.1"/><use href="#s" x="1659.6" y="527.5"/><use href="#s" x="1666.5" y="381.7"/><use href="#s" x="1673.4" y="224.9"/><use href="#s" x="1680.3" y="230.3"/><use href="#s" x="1687.2" y="440.1"/><use href="#s" x="1694.1" y="454.2"/><use href="#s" x="1701.0" y="461.6"/><use href="#s" x="1707.9" y="395.8"/><use href="#s" x="1714.8" y="401.8"/><use href="#s" x="1721.7" y="458.1"/><use href="#s" x="1728.6" y="467.6"/><use href="#s" x="1735.5" y="484.1"/><use href="#s" x="1742.4" y="392.8"/><use href="#s" x="1749.3" y="370.3"/><use href="#s" x="1756.2" y="547.4"/><use href="#s" x="1763.1" y="499.5"/></g>
<path d="M1 772.25H1800.6000000000001M1799.4 96.5V773.25" stroke="#e4e4e4" stroke-width="2" fill="none"/>
<path d="M1800.4 750.3h4.5 M1800.4 674.4h4.5 M1800.4 598.7h4.5 M1800.4 523.2h4.5 M1800.4 448.1h4.5 M1800.4 372.5h4.5 M1800.4 296.8h4.5 M1800.4 221.7h4.5 M1800.4 145.9h4.5" stroke="#f2f2f2" stroke-width="1.4"/>
<path d="M1799.8000000000002 707.7L1811.6000000000001 712.2L1799.8000000000002 716.7Z" fill="#f4f4f4"/>
<path d="M1799.8000000000002 632.1L1811.6000000000001 636.6L1799.8000000000002 641.1Z" fill="#f4f4f4"/>
<path d="M1799.8000000000002 556.2L1811.6000000000001 560.7L1799.8000000000002 565.2Z" fill="#f4f4f4"/>
<path d="M1799.8000000000002 481.1L1811.6000000000001 485.6L1799.8000000000002 490.1Z" fill="#f4f4f4"/>
<path d="M1799.8000000000002 406.1L1811.6000000000001 410.6L1799.8000000000002 415.1Z" fill="#f4f4f4"/>
<path d="M1799.8000000000002 329.8L1811.6000000000001 334.3L1799.8000000000002 338.8Z" fill="#f4f4f4"/>
<path d="M1799.8000000000002 254.7L1811.6000000000001 259.2L1799.8000000000002 263.7Z" fill="#f4f4f4"/>
<path d="M1799.8000000000002 179.7L1811.6000000000001 184.2L1799.8000000000002 188.7Z" fill="#f4f4f4"/>
<path d="M1799.8000000000002 103.2L1811.6000000000001 107.7L1799.8000000000002 112.2Z" fill="#f4f4f4"/>
<path d="M37.5 772.25v5.5 M188.5 772.25v5.5 M334.5 772.25v5.5 M485.5 772.25v5.5 M644.5 772.25v5.5 M790.5 772.25v5.5 M935.5 772.25v5.5 M1087.5 772.25v5.5 M1225.5 772.25v5.5 M1376.5 772.25v5.5 M1508.5 772.25v5.5 M1646.5 772.25v5.5" stroke="#f2f2f2" stroke-width="2"/>
<path d="M1376.5 796.800V802" stroke="#e8e8e8" stroke-width="2"/>
</svg>
<!-- window edges -->
<div class="b" style="left:0;top:0;width:1px;height:802px;background:#484848"></div>
<div class="b" style="left:0;top:0;width:2px;height:97px;background:#404040;z-index:1"></div>
<div class="b" style="left:1918.100px;top:0;width:1.900px;height:802px;background:#2e2e2e"></div>
<div class="b" style="left:1px;top:96.500px;width:3.900px;height:448.500px;background:#ff9900"></div>
<!-- row 1 : red title bar -->
<div class="b" style="left:1.3px;top:0;width:1914.7px;height:27.3px;background:#8b1020"></div>
<div class="b or" style="left:2.7px;top:0;width:210.5px;height:26.2px;border-top:1px solid #7a4a18;box-sizing:border-box"></div>
<div class="b" style="left:428.8px;top:0;width:1.8px;height:27.3px;background:#4a0810"></div>
<div class="b" style="left:563.8px;top:0;width:1.8px;height:27.3px;background:#4a0810"></div>
<div class="b" style="left:663.8px;top:0;width:1.8px;height:27.3px;background:#4a0810"></div>
<div class="b" style="left:430.600px;top:0;width:133px;height:1px;background:#a83848"></div>
<div class="b" style="left:565.600px;top:0;width:98px;height:1px;background:#a83848"></div>
<svg class="b" style="left:547.5px;top:11px" width="9" height="6"><path d="M.5 .3h7.400L4.200 5.300z" fill="#ecd4d8"/></svg>
<svg class="b" style="left:648.3px;top:11px" width="9" height="6"><path d="M.5 .3h7.400L4.200 5.300z" fill="#ecd4d8"/></svg>
<!-- row 2 : inputs -->
<div class="b or" style="left:3px;top:28.800px;width:108px;height:20.500px;box-shadow:0 1px 0 #7a4a10"></div>
<div class="b" style="left:112.4px;top:29px;width:15.4px;height:20.300px;background:#3b3b3b"></div>
<svg class="b" style="left:112.4px;top:29px" width="16" height="21"><path d="M3.200 7h9.400v7.800H3.200z" fill="#2a2a2a" stroke="#c4c4c4" stroke-width="1.5"/><path d="M3.200 8.200h9.400" stroke="#c4c4c4" stroke-width="2"/><path d="M4 4.200v3M11.800 4.200v3" stroke="#c4c4c4" stroke-width="1.700"/></svg>
<div class="b or" style="left:144px;top:28.800px;width:108px;height:20.500px;box-shadow:0 1px 0 #7a4a10"></div>
<div class="b" style="left:253.4px;top:29px;width:15.4px;height:20.300px;background:#3b3b3b"></div>
<svg class="b" style="left:253.4px;top:29px" width="16" height="21"><path d="M3.200 7h9.400v7.800H3.200z" fill="#2a2a2a" stroke="#c4c4c4" stroke-width="1.5"/><path d="M3.200 8.200h9.400" stroke="#c4c4c4" stroke-width="2"/><path d="M4 4.200v3M11.800 4.200v3" stroke="#c4c4c4" stroke-width="1.700"/></svg>
<div class="b or" style="left:277px;top:28.800px;width:121px;height:20.500px;box-shadow:0 1px 0 #7a4a10"></div>
<div class="b or" style="left:405.6px;top:28.800px;width:100.4px;height:20.500px;box-shadow:0 1px 0 #7a4a10"></div>
<div class="b" style="left:507px;top:29px;width:15.5px;height:20.300px;background:#3b3b3b"></div>
<svg class="b" style="left:511.500px;top:37px" width="8" height="6"><path d="M.2 .2h5.600L3 4.500z" fill="#e4e4e4"/></svg>
<div class="b" style="left:533.800px;top:31.700px;width:13.600px;height:13.900px;background:#3296f8"></div>
<svg class="b" style="left:533.800px;top:31.700px" width="14" height="14"><path d="M2.600 8.400l2.900 2.400L10.500 5" fill="none" stroke="#04101e" stroke-width="2.300"/></svg>
<svg class="b" style="left:636px;top:29px" width="20" height="20"><path d="M4.100 11.100L14 1.700L18.200 5.300L8.300 14.900z" fill="#e2e2e2"/><path d="M3.500 12.200L7.400 15.800L1.300 18.400z" fill="#e2e2e2"/></svg>
<div class="b" style="left:667.200px;top:32.200px;width:14px;height:13.200px;background:#4a4a4a"></div>
<!-- row 4 : range toolbar -->
<div class="b" style="left:1.3px;top:73.800px;width:1440.6px;height:22.700px;background:#22201d"></div>
<div class="tb" style="left:2.6px;width:40px"></div>
<div class="tb" style="left:42.6px;width:42px;background:#2a2a2a"></div>
<div class="tb" style="left:84.6px;width:42px"></div>
<div class="tb" style="left:126.600px;width:42px;background:#2a2a2a"></div>
<div class="tb" style="left:168.600px;width:42px"></div>
<div class="tb" style="left:210.600px;width:50px;background:#2a2a2a"></div>
<div class="b" style="left:222px;top:94.200px;width:38.600px;height:2.300px;background:#1565d8"></div>
<div class="tb" style="left:260.600px;width:42px"></div>
<div class="tb" style="left:304px;width:48px"></div>
<div class="tb" style="left:353px;width:76px"></div>
<svg class="b" style="left:407.5px;top:79.500px" width="14" height="12"><path d="M.5 .5h12L6.500 11z" fill="#f2f2f2"/></svg>
<div class="tb" style="left:435px;width:28.200px;background:#1157cf"></div>
<svg class="b" style="left:435px;top:74px" width="28" height="22"><path d="M8.500 5v12h13.500" fill="none" stroke="#8fbcff" stroke-width="1.5"/><path d="M10 12.500l4-4.500 4 3 4.500-3.500" fill="none" stroke="#8fbcff" stroke-width="1.5"/></svg>
<div class="tb" style="left:467px;width:80px"></div>
<!-- tooltip -->
<div class="b" style="left:127.800px;top:65.300px;width:147.400px;height:25.700px;background:#f1f1f9;border:1px solid #8e8e9a;box-shadow:1.200px 1.200px 0 #4a4a4a;z-index:4"></div>
<!-- right of toolbar -->
<div class="tb" style="left:1442px;width:95.500px;border-top:1px solid #2c2c2c;box-sizing:border-box"></div>
<svg class="b" style="left:1521.5px;top:83px" width="8" height="6"><path d="M.3 .3h6.800L3.700 4.900z" fill="#d8d8d8"/></svg>
<div class="b or" style="left:1538.8px;top:75px;width:211.800px;height:21.200px"></div>
<div class="tb" style="left:1752.5px;width:25.500px"></div>
<svg class="b" style="left:1758px;top:77px" width="17" height="16"><path d="M7.500 1.500L2.500 7.800l5 6.200M14 1.500L9 7.800l5 6.200" fill="none" stroke="#e2e2e2" stroke-width="2.400"/></svg>
<div class="tb" style="left:1780px;width:106px"></div>
<svg class="b" style="left:1785px;top:76px" width="18" height="18"><path d="M5.600 9.500L13.800 1.700L16.500 4.500L8.800 12.200z" fill="#dcdcdc"/><path d="M4.700 10.900L7.400 13.600L1.500 15.900z" fill="#dcdcdc"/></svg>
<div class="tb" style="left:1887.5px;width:27px"></div>
<svg class="b" style="left:1893.5px;top:77px" width="15" height="15" viewBox="-7.500 -7.500 15 15"><g fill="#e4e4e4"><circle r="4.600"/><g id="gt"><rect x="-1.400" y="-7.200" width="2.800" height="14.400"/><rect x="-7.200" y="-1.400" width="14.400" height="2.800"/></g><use href="#gt" transform="rotate(45)"/></g><circle r="2.200" fill="#1b1b1b"/></svg>
<!-- chart mode bar -->
<div class="b" style="left:746.600px;top:98px;width:97px;height:29.700px;background:rgba(42,42,42,.5)"></div>
<div class="b" style="left:844.600px;top:98px;width:120.400px;height:29.700px;background:rgba(26,64,106,.52)"></div>
<div class="b" style="left:966.900px;top:98px;width:91.100px;height:29.700px;background:rgba(42,42,42,.5)"></div>
<div class="b" style="left:1060px;top:98px;width:93.800px;height:29.700px;background:rgba(42,42,42,.5)"></div>
<svg class="b" style="left:755px;top:103px" width="20" height="20"><circle cx="10.500" cy="9.500" r="4.500" fill="none" stroke="#6c6c6c" stroke-width="1.300"/><path d="M10.500 1.500v16M2.500 9.500h16" stroke="#6c6c6c" stroke-width="1.300"/></svg>
<svg class="b" style="left:854px;top:103px" width="20" height="20"><path d="M3 14.500L12.500 4l2 2L5 16.500z" fill="#5f6b78"/><path d="M9 17h7" stroke="#5f6b78" stroke-width="1.300"/></svg>
<svg class="b" style="left:978px;top:104px" width="18" height="18"><path d="M1.900 2.100h5v3.400h-5z" fill="#727272"/><path d="M9 2.600h5.500v2.400H9z" fill="none" stroke="#727272" stroke-width="1.100"/><path d="M1.500 8.500h13.500M1.500 12h13.500M1.500 15.500h13.500" stroke="#727272" stroke-width="1.300"/></svg>
<svg class="b" style="left:1068px;top:101px" width="24" height="24"><circle cx="9" cy="9.600" r="5.600" fill="none" stroke="#727272" stroke-width="1.300"/><path d="M13 13.600l4.500 4.500" stroke="#727272" stroke-width="1.300"/><path d="M18.500 14.500v5.500h-5z" fill="#727272"/></svg>
<!-- legend -->
<div class="b" style="left:7.500px;top:133px;width:327px;height:140.700px;background:rgba(30,30,30,.46);border-radius:5px"></div>
<svg class="b" style="left:14px;top:142px" width="44" height="124"><g fill="none" stroke="#8c8c8c" stroke-width="1.300"><path d="M4.500 7.800h9.800v9.400H4.500zM6.800 12.500h5.200M9.200 17.200v92.600h5.500M9.200 37.600h5M9.200 61.700h5M9.200 86h5"/><path d="M28.500 28.500v17M28.500 75.800v16"/><path d="M19 61.700h17.500"/><circle cx="28" cy="61.700" r="2.800"/></g><path d="M22 28h13l-5 3h-3zM22.400 94h11.800l-4.700-3.600h-2.400z" fill="#8c8c8c"/><g stroke="#fff" stroke-width="1.100"><path d="M23 13.600h11M28.500 8.100v11M24.600 9.700l7.800 7.800M24.600 17.500l7.800-7.800"/></g><circle cx="28.500" cy="13.600" r="2.100" fill="#fff"/><rect x="18.600" y="99.800" width="18.800" height="18.200" fill="#1db93d"/></svg>
<svg class="b" style="left:1800px;top:384px;z-index:2" width="117" height="27"><path d="M1.800 13.300L10.500 .5H116V26H10.500Z" fill="#1db93d"/></svg>
<svg class="b" style="left:1800px;top:486px;z-index:2" width="117" height="27"><path d="M1.800 13.300L10.500 .5H116V26H10.500Z" fill="#ffffff"/></svg>
<div class="a t" style="left:5.37px;top:2.61px;font-size:22.3px;color:#1a0e00;transform:scaleX(1.0175)">.TOTOPTVO U Index</div>
<div class="a t" style="left:222.84px;top:3.01px;font-size:20.5px;color:#620a2a;transform:scaleX(0.6898)">94)</div>
<div class="a t" style="left:251.00px;top:3.01px;font-size:20.5px;color:#620a2a;transform:scaleX(1.0392)">Suggested Charts</div>
<div class="a t k" style="left:438.07px;top:1.75px;font-size:21.5px;color:#f1cdd5;transform:scaleX(0.6746)">96)</div>
<div class="a t k" style="left:466.25px;top:1.75px;font-size:21.5px;color:#fff;transform:scaleX(1.0102)">Actions</div>
<div class="a t k" style="left:573.07px;top:1.61px;font-size:21.5px;color:#f1cdd5;transform:scaleX(0.6746)">97)</div>
<div class="a t k" style="left:599.80px;top:1.61px;font-size:21.5px;color:#fff;transform:scaleX(1.0116)">Edit</div>
<div class="a t k" style="left:1797.96px;top:0.80px;font-size:22.6px;color:#fff;transform:scaleX(0.9831)">Line Chart</div>
<div class="a t" style="left:7.18px;top:30.31px;font-size:18px;color:#1a0e00;transform:scaleX(1.0890)">03/24/2020</div>
<div class="a t k" style="left:133.38px;top:30.31px;font-size:18px;color:#f9981f;transform:scaleX(1.4667)">-</div>
<div class="a t" style="left:148.38px;top:30.31px;font-size:18px;color:#1a0e00;transform:scaleX(1.0913)">03/23/2021</div>
<div class="a t" style="left:280.36px;top:30.01px;font-size:17.9px;color:#1a0e00;transform:scaleX(1.1007)">Last Px</div>
<div class="a t" style="left:406.99px;top:30.01px;font-size:17.9px;color:#1a0e00;transform:scaleX(1.0082)">Local CCY</div>
<div class="a t k" style="left:554.15px;top:30.20px;font-size:17.8px;color:#f9981f;transform:scaleX(1.0442)">Mov Avgs</div>
<div class="a t k" style="left:687.91px;top:30.20px;font-size:17.8px;color:#f9981f;transform:scaleX(1.0719)">Key Events</div>
<div class="a t k" style="left:3.90px;top:54.41px;font-size:18px;color:#5fdcec;transform:scaleX(1.0581)">Total US Options Volume</div>
<div class="a t k" style="left:241.05px;top:54.41px;font-size:18px;color:#f9981f;transform:scaleX(1.0019)">OPCVTOTC Index + OPCVTOTP Ind...</div>
<div class="a t k" style="left:545.93px;top:54.41px;font-size:18px;color:#f9981f;transform:scaleX(1.1148)">Last Price</div>
<div class="a t k" style="left:644.75px;top:54.41px;font-size:18px;color:#f22c42;transform:scaleX(1.0105)">8506.4531</div>
<div class="a t k" style="left:748.18px;top:54.41px;font-size:18px;color:#f22c42;transform:scaleX(1.0074)">-25630.6406</div>
<div class="a t k" style="left:856.96px;top:54.41px;font-size:18px;color:#f22c42;transform:scaleX(0.9622)">-75.08%</div>
<div class="a t k" style="left:940.00px;top:54.41px;font-size:18px;color:#f9981f;transform:scaleX(1.0479)">Volume</div>
<div class="a t k" style="left:1030.15px;top:54.41px;font-size:18px;color:#f4f4f4;transform:scaleX(1.0383)">1.01k</div>
<div class="a t k" style="left:12.84px;top:78.21px;font-size:15.2px;color:#f2f2f2;transform:scaleX(1.0934)">1D</div>
<div class="a t k" style="left:54.61px;top:78.21px;font-size:15.2px;color:#f2f2f2;transform:scaleX(1.0380)">3D</div>
<div class="a t k" style="left:95.91px;top:78.21px;font-size:15.2px;color:#f2f2f2;transform:scaleX(1.1135)">1M</div>
<div class="a t k" style="left:272.50px;top:78.21px;font-size:15.2px;color:#f2f2f2;transform:scaleX(1.0492)">5Y</div>
<div class="a t k" style="left:313.16px;top:78.21px;font-size:15.2px;color:#f2f2f2;transform:scaleX(1.0473)">Max</div>
<div class="a t k" style="left:361.18px;top:78.21px;font-size:15.2px;color:#f2f2f2;transform:scaleX(1.1128)">Daily</div>
<div class="a t k" style="left:487.78px;top:78.21px;font-size:15.2px;color:#f2f2f2;transform:scaleX(1.1863)">Table</div>
<div class="a t k" style="left:1448.63px;top:78.40px;font-size:15.6px;color:#f2f2f2;transform:scaleX(1.0528)">Compare</div>
<div class="a t" style="left:1541.25px;top:77.26px;font-size:17.2px;color:#a9781f;transform:scaleX(1.0440)">Add Data</div>
<div class="a t k" style="left:1806.21px;top:78.21px;font-size:15.5px;color:#f2f2f2;transform:scaleX(1.0687)">Edit Chart</div>
<div class="a t" style="left:136.07px;top:71.70px;font-size:17.5px;color:#6b6c80;transform:scaleX(1.1186);z-index:5">March 24 2020</div>
<div class="a t k" style="left:787.32px;top:104.76px;font-size:17.1px;color:#dadada;transform:scaleX(1.1920)">Track</div>
<div class="a t k" style="left:883.30px;top:104.76px;font-size:17.1px;color:#dadada;transform:scaleX(1.0827)">Annotate</div>
<div class="a t k" style="left:1005.39px;top:104.76px;font-size:17.1px;color:#dadada;transform:scaleX(1.1334)">News</div>
<div class="a t k" style="left:1098.80px;top:104.76px;font-size:17.1px;color:#dadada;transform:scaleX(1.1260)">Zoom</div>
<div class="a t k" style="left:55.79px;top:147.91px;font-size:19.7px;color:#f2f2f2;transform:scaleX(1.1085)">Last Price</div>
<div class="a t k" style="left:55.89px;top:171.91px;font-size:19.7px;color:#f2f2f2;transform:scaleX(1.0491)">High on 01/27/21</div>
<div class="a t k" style="left:57.50px;top:195.91px;font-size:19.7px;color:#f2f2f2;transform:scaleX(0.9734)">Average</div>
<div class="a t k" style="left:55.87px;top:219.91px;font-size:19.7px;color:#f2f2f2;transform:scaleX(1.0577)">Low on 12/24/20</div>
<div class="a t k" style="left:56.57px;top:243.91px;font-size:19.7px;color:#f2f2f2;transform:scaleX(1.0051)">SMAVG (30)</div>
<div class="a t k" style="left:223.82px;top:147.01px;font-size:20px;color:#f2f2f2;transform:scaleX(0.9404)">34137.0898</div>
<div class="a t k" style="left:223.82px;top:171.01px;font-size:20px;color:#f2f2f2;transform:scaleX(0.9404)">57165.1289</div>
<div class="a t k" style="left:223.82px;top:195.01px;font-size:20px;color:#f2f2f2;transform:scaleX(0.9432)">31230.9727</div>
<div class="a t k" style="left:223.23px;top:219.01px;font-size:20px;color:#f2f2f2;transform:scaleX(0.9460)">19712.8418</div>
<div class="a t k" style="left:224.42px;top:243.01px;font-size:20px;color:#f2f2f2;transform:scaleX(0.9322)">40887.2266</div>
<div class="a t k" style="left:1812.55px;top:704.00px;font-size:20.4px;color:#ececec;transform:scaleX(0.9385)">20000</div>
<div class="a t k" style="left:1812.55px;top:628.41px;font-size:20.4px;color:#ececec;transform:scaleX(0.9385)">25000</div>
<div class="a t k" style="left:1812.55px;top:552.50px;font-size:20.4px;color:#ececec;transform:scaleX(0.9385)">30000</div>
<div class="a t k" style="left:1812.55px;top:477.41px;font-size:20.4px;color:#ececec;transform:scaleX(0.9385)">35000</div>
<div class="a t k" style="left:1813.16px;top:402.41px;font-size:20.4px;color:#ececec;transform:scaleX(0.9279)">40000</div>
<div class="a t k" style="left:1813.16px;top:326.11px;font-size:20.4px;color:#ececec;transform:scaleX(0.9279)">45000</div>
<div class="a t k" style="left:1812.55px;top:251.00px;font-size:20.4px;color:#ececec;transform:scaleX(0.9385)">50000</div>
<div class="a t k" style="left:1812.55px;top:176.00px;font-size:20.4px;color:#ececec;transform:scaleX(0.9385)">55000</div>
<div class="a t k" style="left:1812.55px;top:101.00px;font-size:20.4px;color:#ececec;transform:scaleX(0.9385)">60000</div>
<div class="a t k" style="left:1811.41px;top:388.41px;font-size:20px;color:#fff;transform:scaleX(0.9368);z-index:3">40887.2266</div>
<div class="a t" style="left:1810.82px;top:490.41px;font-size:20px;color:#000;transform:scaleX(0.9451);z-index:3">34137.0898</div>
<div class="a t k" style="left:97.70px;top:776.30px;font-size:20.3px;color:#ececec;transform:scaleX(0.8738)">Apr</div>
<div class="a t k" style="left:242.02px;top:776.30px;font-size:20.3px;color:#ececec;transform:scaleX(0.9321)">May</div>
<div class="a t k" style="left:393.19px;top:776.30px;font-size:20.3px;color:#ececec;transform:scaleX(0.9918)"><span style="font-family:'Liberation Sans',sans-serif">J</span>un</div>
<div class="a t k" style="left:550.46px;top:776.30px;font-size:20.3px;color:#ececec;transform:scaleX(1.0723)"><span style="font-family:'Liberation Sans',sans-serif">J</span>ul</div>
<div class="a t k" style="left:700.80px;top:776.30px;font-size:20.3px;color:#ececec;transform:scaleX(0.9118)">Aug</div>
<div class="a t k" style="left:845.82px;top:776.30px;font-size:20.3px;color:#ececec;transform:scaleX(0.9244)">Sep</div>
<div class="a t k" style="left:993.66px;top:776.30px;font-size:20.3px;color:#ececec;transform:scaleX(0.9921)">Oct</div>
<div class="a t k" style="left:1136.75px;top:776.30px;font-size:20.3px;color:#ececec;transform:scaleX(0.9789)">Nov</div>
<div class="a t k" style="left:1283.24px;top:776.30px;font-size:20.3px;color:#ececec;transform:scaleX(0.9812)">Dec</div>
<div class="a t k" style="left:1425.08px;top:776.30px;font-size:20.3px;color:#ececec;transform:scaleX(1.0041)"><span style="font-family:'Liberation Sans',sans-serif">J</span>an</div>
<div class="a t k" style="left:1559.14px;top:776.30px;font-size:20.3px;color:#ececec;transform:scaleX(1.0491)">Feb</div>
<div class="a t k" style="left:1707.85px;top:776.30px;font-size:20.3px;color:#ececec;transform:scaleX(0.9158)">Mar</div>
<div class="a t k" style="left:667.50px;top:797.71px;font-size:20.3px;color:#ececec;transform:scaleX(0.8800)">2020</div>
<div class="a t k" style="left:1566.14px;top:797.71px;font-size:20.3px;color:#ececec;transform:scaleX(0.8800)">2021</div>
</body></html>
